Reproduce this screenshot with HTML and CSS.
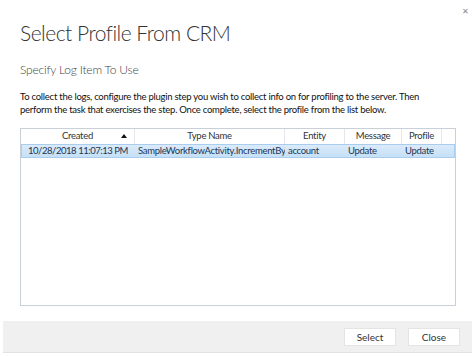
FILE: index.html
```html
<!DOCTYPE html>
<html>
  <head>
    <title>Select Profile From CRM</title>
    <link rel="stylesheet" href="styles.css">
  </head>
  <body>
    <div class="dialog">
      <div class="content">
        <div class="header">
          <h1 class="title">Select Profile From CRM</h1>
          <span class="close">&#x2715;</span>
        </div>
        <h2 class="subtitle">Specify Log Item To Use</h2>
        <p class="info">To collect the logs, configure the plugin step you wish to collect info on for profiling to the server. Then perform the task that exercises the step. Once complete, select the profile from the list below.</p>

        <div class="list">
          <div class="list-head">
            <div class="col sorted">Created <span class="arrow"></span></div>
            <div class="col">Type Name</div>
            <div class="col">Entity</div>
            <div class="col">Message</div>
            <div class="col">Profile</div>
            <div class="col"></div>
          </div>
          <div class="list-row selected">
            <div class="cell">10/28/2018 11:07:13 PM</div>
            <div class="cell">SampleWorkflowActivity.IncrementByTen</div>
            <div class="cell">account</div>
            <div class="cell">Update</div>
            <div class="cell">Update</div>
            <div class="cell"></div>
          </div>
        </div>
      </div>

      <div class="footer">
        <button class="btn">Select</button>
        <button class="btn">Close</button>
      </div>
    </div>
  </body>
</html>
```

FILE: styles.css
```css
body {
  margin: 0;
  background: #fff;
  font-family: Lato, "Open Sans", sans-serif;
  color: #222;
}

.dialog {
  display: flex;
  flex-direction: column;
  height: 357px;
}

.content {
  flex: 1;
  padding: 18px 18px 0 20px;
}

.header {
  display: flex;
  justify-content: space-between;
  align-items: flex-start;
}

.title {
  margin: 0;
  font-size: 21px;
  font-weight: 300;
  letter-spacing: -0.5px;
  line-height: 30px;
  color: #333;
}

.close {
  margin: -12px -13px 0 0;
  font-size: 8px;
  color: #888;
}

.subtitle {
  margin: 13px 0 0;
  font-size: 12px;
  font-weight: 300;
  letter-spacing: -0.2px;
  line-height: 18px;
  color: #444;
}

.info {
  max-width: 404px;
  margin: 11px 0 0;
  font-size: 9.5px;
  letter-spacing: -0.25px;
  line-height: 13px;
  color: #111;
}

.list {
  margin-top: 12px;
  width: 434px;
  height: 176px;
  border: 1px solid #c9d0d8;
  font-size: 9.5px;
  letter-spacing: -0.3px;
}

.list-head,
.list-row {
  display: grid;
  grid-template-columns: 114px 150px 60px 57px 40px 1fr;
}

.list-head {
  height: 15px;
  line-height: 14px;
  color: #333;
}

.col {
  position: relative;
  text-align: center;
  border-right: 1px solid #e3e6ea;
}

.col:last-child {
  border-right: none;
}

.arrow {
  position: absolute;
  right: 7px;
  top: 5px;
  border-left: 3px solid transparent;
  border-right: 3px solid transparent;
  border-bottom: 4px solid #111;
}

.list-row {
  height: 14px;
  line-height: 14px;
}

.list-row.selected {
  background: linear-gradient(#dcebfb, #c4dff6);
  box-shadow: inset 0 0 0 1px #a9cdef;
  color: #1b3554;
}

.cell {
  padding: 0 2px 0 3px;
  white-space: nowrap;
  overflow: hidden;
}

.cell:first-child {
  padding-left: 7px;
  letter-spacing: -0.45px;
}

.footer {
  display: flex;
  justify-content: flex-end;
  gap: 12px;
  margin: 0 2px 4px 3px;
  padding: 7px 12px 0 0;
  height: 24px;
  background: #f0f0f0;
  border-bottom: 1px solid #e2e2e2;
}

.btn {
  width: 52px;
  height: 18px;
  padding: 0;
  background: #fff;
  border: 1px solid #e4e4e4;
  font-family: Lato, "Open Sans", sans-serif;
  font-size: 10px;
  color: #333;
}
```
